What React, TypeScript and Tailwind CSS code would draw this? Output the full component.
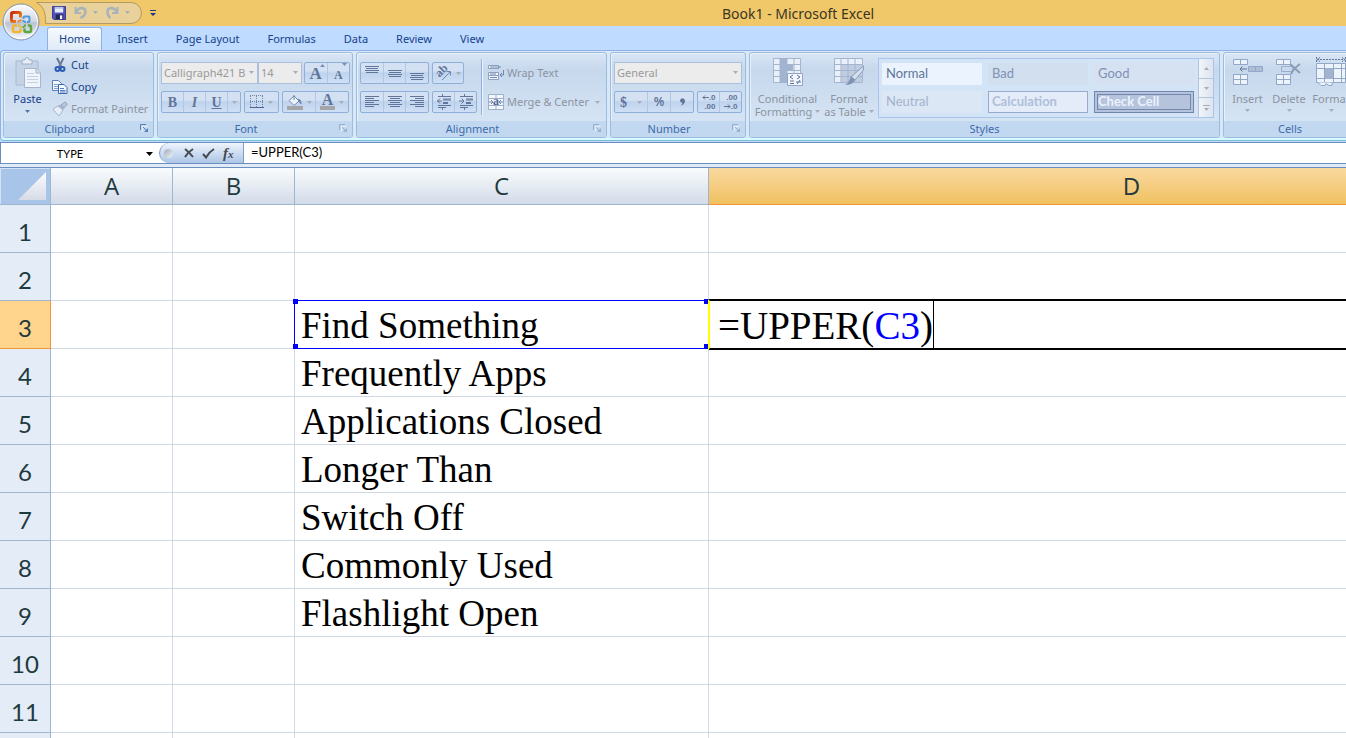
import type { ReactNode } from 'react';

const columns = ['A', 'B', 'C', 'D'];

const rows = [
  '',
  '',
  'Find Something',
  'Frequently Apps',
  'Applications Closed',
  'Longer Than',
  'Switch Off',
  'Commonly Used',
  'Flashlight Open',
  '',
  '',
];

const tabs = ['Insert', 'Page Layout', 'Formulas', 'Data', 'Review', 'View'];

const cellStyles = [
  { name: 'Normal', look: 'pl-1 bg-[#ebf3fe] text-[#5f7699]' },
  { name: 'Bad', look: 'pl-1 bg-[#d2dfee] text-[#7f92b4]' },
  { name: 'Good', look: 'pl-1 bg-[#d6e2f2] text-[#7f92b4]' },
  { name: 'Neutral', look: 'pl-1 bg-[#dbe7f5] text-[#a2b3cd]' },
  { name: 'Calculation', look: 'pl-[3px] border border-[#98abcc] bg-[#e4ecfa] font-bold text-[#afbfd8]' },
  { name: 'Check Cell', look: 'border-4 border-double border-[#7386ac] bg-[#b5c4dc] font-bold text-[#ebf2fd]' },
];

function Arrow({ color = 'text-[#a8aeb8]' }: { color?: string }) {
  return (
    <svg width="5" height="3" viewBox="0 0 5 3" className={`shrink-0 ${color}`}>
      <path d="M0 0h5L2.5 3z" fill="currentColor" />
    </svg>
  );
}

function Launcher({ active }: { active?: boolean }) {
  return (
    <button aria-label="More options" className={`absolute right-1 top-[3px] ${active ? 'text-[#5a7fae]' : 'text-[#9aafc9]'}`}>
      <svg width="9" height="9" viewBox="0 0 9 9" fill="none" stroke="currentColor">
        <path d="M.5 6V.5H6" />
        <path d="M3 3l4 4" />
        <path d="M4 8h4V4z" fill="currentColor" stroke="none" />
        <path d="M2.500 7.500v-5h5" stroke="#fff" opacity=".6" />
      </svg>
    </button>
  );
}

function Group({ title, width, children, launcher, active }: { title: string; width: string; children: ReactNode; launcher?: boolean; active?: boolean }) {
  return (
    <section className={`${width} flex h-[86px] shrink-0 flex-col overflow-hidden rounded-[3px] border border-[#9cbcdb] bg-linear-to-b from-[#d9e6f5] from-0% via-[#c7d8ed] via-20% to-[#d9e8f6] to-100% shadow-[inset_1px_1px_0_#e9f2fb]`}>
      <div className="flex h-[68px] pl-[3px] pt-[9px]">{children}</div>
      <div className={`relative h-4 bg-[#c1d8f0] text-center leading-4 text-[#3e6aaa] ${launcher ? 'pr-[18px]' : ''}`}>
        {title}
        {launcher && <Launcher active={active} />}
      </div>
    </section>
  );
}

function Strip({ children, width }: { children: ReactNode; width: string }) {
  return (
    <div className={`${width} flex h-[22px] divide-x divide-[#b0c8e6] rounded-[2px] border border-[#8fb0da] bg-linear-to-b from-[#d3e1f3] from-40% via-[#bfd3ed] via-50% to-[#cfe0f5] text-[#5f7599]`}>
      {children}
    </div>
  );
}

function Tool({ label, children }: { label: string; children: ReactNode }) {
  return (
    <button aria-label={label} className="flex flex-1 items-center justify-center gap-1">
      {children}
    </button>
  );
}

function Combo({ label, value, width }: { label: string; value: string; width: string }) {
  return (
    <div className={`${width} relative`}>
      <select aria-label={label} className="h-[22px] w-full appearance-none border border-[#abc0da] bg-[#ececec] pl-[2px] pr-3 text-[#9a9a9a]">
        <option>{value}</option>
      </select>
      <span className="pointer-events-none absolute right-1 top-[9px]">
        <Arrow />
      </span>
    </div>
  );
}

function Lines({ d }: { d: string }) {
  return (
    <svg width="14" height="16" viewBox="0 0 14 16" stroke="#5f7599" fill="none">
      <path d={d} />
    </svg>
  );
}

function BigButton({ icon, label, second, width }: { icon: ReactNode; label: string; second?: string; width: string }) {
  return (
    <button className={`${width} flex shrink-0 flex-col items-center text-[#8c93a0]`}>
      <span className="-mt-[5px] flex h-[30px] items-center">{icon}</span>
      <span className="mt-[5px] leading-[13px]">{label}</span>
      {second ? (
        <span className="flex items-center gap-[3px] leading-[13px]">
          {second}
          <Arrow />
        </span>
      ) : (
        <span className="flex h-[11px] items-center">
          <Arrow />
        </span>
      )}
    </button>
  );
}

function OfficeButton() {
  return (
    <button aria-label="Office Button" className="absolute left-[2px] top-[3px] z-10">
      <svg width="38" height="38" viewBox="0 0 38 38">
        <defs>
          <linearGradient id="orb" x1="0" y1="0" x2="0" y2="1">
            <stop offset="0" stopColor="#fdfdfe" />
            <stop offset=".48" stopColor="#d4d9e3" />
            <stop offset=".52" stopColor="#b9c2d2" />
            <stop offset="1" stopColor="#f9fcff" />
          </linearGradient>
          <linearGradient id="red" x1="0" y1="0" x2="1" y2="1">
            <stop offset="0" stopColor="#c9280b" />
            <stop offset="1" stopColor="#f59a22" />
          </linearGradient>
        </defs>
        <circle cx="19" cy="19" r="18" fill="url(#orb)" stroke="#8292ac" />
        <circle cx="19" cy="19" r="16.500" fill="none" stroke="#fff" opacity=".8" />
        <g fill="none" strokeWidth="3">
          <path d="M14 18.500h-3Q9.500 18.500 9.500 17v-6q0-1.500 1.500-1.500h6q1.500 0 1.500 1.500v3.500" stroke="url(#red)" />
          <path d="M15.500 18.500h3V16" stroke="#ee7b1c" strokeWidth="2" strokeDasharray="2 1" />
          <path d="M21.500 16v-1.500q0-1 1-1h4q1 0 1 1V18q0 1-1 1H25" stroke="#4b9bdc" strokeWidth="2" />
          <path d="M21.500 17v2H24" stroke="#4b9bdc" strokeWidth="2" strokeDasharray="2 1" />
          <path d="M15 22.500h-2.500Q11 22.500 11 24v3.500q0 1.500 1.500 1.500H17q1.500 0 1.500-1.500v-2" stroke="#f4b52e" strokeWidth="2.500" />
          <path d="M16 22.500h2.500V25" stroke="#f4b52e" strokeWidth="2" strokeDasharray="2 1" />
          <path d="M22.500 25.500v2q0 1.500 1.500 1.500h3.500q1.500 0 1.500-1.500V24q0-1.500-1.500-1.500H26" stroke="#5da53c" strokeWidth="2.500" />
          <path d="M21.500 25v-2.500H25" stroke="#5da53c" strokeWidth="2" strokeDasharray="2 1" />
        </g>
      </svg>
    </button>
  );
}

function TitleBar() {
  return (
    <header className="relative flex h-[26px] shrink-0 bg-[#f0c869]">
      <svg width="108" height="24" viewBox="0 0 108 24" className="absolute left-[36px] top-[1px]">
        <path d="M.5 1.500H95a10.500 10.500 0 0 1 0 21H9.500Q10.500 6 .5 1.500z" fill="#e8d19b" stroke="#b59a62" />
      </svg>
      <div className="relative flex h-[25px] items-center pl-[52px]">
        <button aria-label="Save">
          <svg width="14" height="14" viewBox="0 0 15 15">
            <path d="M.5.500h14v14H2l-1.500-1.500z" fill="#4f53ba" stroke="#34368c" />
            <path d="M3 1h9v6H3z" fill="#e7edf8" />
            <path d="M3 1h9v2H3z" fill="#b6c3e2" />
            <path d="M4 9h8v5H4z" fill="#24264f" />
            <path d="M8.500 10h2.500v4H8.500z" fill="#f4f6fb" />
          </svg>
        </button>
        <button aria-label="Undo" className="ml-2 flex items-center gap-[6px]">
          <svg width="13" height="13" viewBox="0 0 13 13" fill="none" stroke="#a9b2bb" strokeWidth="2">
            <path d="M1.500 1v6H7" />
            <path d="M2 6.500Q4 2 8 2q3.500.300 3.500 4Q11 10 6.500 12" strokeWidth="2.500" />
          </svg>
          <Arrow />
        </button>
        <button aria-label="Redo" className="ml-2 flex items-center gap-[6px]">
          <svg width="13" height="13" viewBox="0 0 13 13" fill="none" stroke="#a9b2bb" strokeWidth="2">
            <path d="M11.500 1v6H6" />
            <path d="M11 6.500Q9 2 5 2 1.500 2.300 1.500 6q0 3.500 3 6" strokeWidth="2.500" />
          </svg>
          <Arrow />
        </button>
        <button aria-label="Customize Quick Access Toolbar" className="ml-[20px]">
          <svg width="6" height="6" viewBox="0 0 6 6" fill="#1d3f7d">
            <path d="M0 0h6v1H0zM0 3h6L3 6z" />
          </svg>
        </button>
      </div>
      <h1 className="absolute left-[722px] top-0 text-[14px] leading-[27px] text-[#3b3523]">Book1 - Microsoft Excel</h1>
    </header>
  );
}

function ClipboardGroup() {
  return (
    <Group title="Clipboard" width="w-[151px]" launcher active>
      <button className="flex w-[41px] flex-col items-center text-[#15428b]">
        <svg width="28" height="32" viewBox="0 0 28 32" className="-mt-[5px]">
          <path d="M2 4h22v24H2z" fill="#c6d3e6" stroke="#a9bad2" />
          <path d="M8 3h3q0-2.500 2-2.500T15 3h3v4H8z" fill="#e9eef6" stroke="#9dafc8" />
          <path d="M10.500 11.500H22l4.500 4.500v14.500h-16z" fill="#f0f4fb" stroke="#a4b5cf" />
          <path d="M22 11.500V16h4.500" fill="#d5dfed" stroke="#a4b5cf" />
          <path d="M13 16.500h7M13 19.500h11M13 22.500h11M13 25.500h11" stroke="#c5d1e3" />
        </svg>
        <span className="mt-[2px] leading-[15px]">Paste</span>
        <span className="mt-1"><Arrow color="text-[#5474a8]" /></span>
      </button>
      <div className="-mt-2 ml-1 flex flex-col text-[#15428b]">
        <button className="flex h-[22px] items-center gap-[3px]">
          <svg width="16" height="16" viewBox="0 0 16 16" fill="none">
            <path d="M5 1l4.500 9M11.500 1L7 10" stroke="#6b7a94" strokeWidth="2" />
            <circle cx="5.500" cy="12" r="2" stroke="#2c5bb5" strokeWidth="2" />
            <circle cx="10.500" cy="12" r="2" stroke="#2c5bb5" strokeWidth="2" />
          </svg>
          Cut
        </button>
        <button className="flex h-[22px] items-center gap-[3px]">
          <svg width="16" height="16" viewBox="0 0 16 16">
            <path d="M.5 1.500h6l3 3v7h-9z" fill="#f4f8ff" stroke="#5c7fb9" />
            <path d="M2 5.500h4M2 7.500h4M2 9.500h4" stroke="#7fa0d2" />
            <path d="M6.500 5.500h5.500l3 3v6H6.500z" fill="#f4f8ff" stroke="#3c66ad" />
            <path d="M8 9.500h4M8 11.500h5.500M8 13h5.500" stroke="#4f7bc0" />
          </svg>
          Copy
        </button>
        <button className="flex h-[22px] items-center gap-[3px] text-[#8c93a0]">
          <svg width="16" height="16" viewBox="0 0 16 16">
            <path d="M1 8l5-3 5 4-4 6q-3-3-6-7z" fill="#e9eff8" stroke="#a5b3c9" />
            <path d="M6 4.500l2-1 4 3.500-1 2z" fill="#a8b5ca" />
            <path d="M9 4l4-3 2.500 2-3.500 4z" fill="#b9c5d8" stroke="#93a4c0" />
          </svg>
          Format Painter
        </button>
      </div>
    </Group>
  );
}

function FontGroup() {
  return (
    <Group title="Font" width="w-[196px]" launcher>
      <div className="flex flex-col gap-[7px]">
        <div className="flex">
          <Combo label="Font" value="Calligraph421 BT" width="w-[97px]" />
          <Combo label="Font size" value="14" width="w-[44px]" />
          <div className="ml-[2px]">
            <Strip width="w-[46px]">
              <Tool label="Grow font">
                <span className="relative pt-[2px] font-['Liberation_Serif',serif] text-[17px] font-bold leading-4">
                  A<span className="absolute -right-[3px] top-0 rotate-180"><Arrow color="text-[#7c8fb0]" /></span>
                </span>
              </Tool>
              <Tool label="Shrink font">
                <span className="relative pt-1 font-['Liberation_Serif',serif] text-[12px] font-bold leading-[14px]">
                  A<span className="absolute -right-1 -top-px"><Arrow color="text-[#7c8fb0]" /></span>
                </span>
              </Tool>
            </Strip>
          </div>
        </div>
        <div className="flex gap-[3px] font-['Liberation_Serif',serif]">
          <Strip width="w-[80px]">
            <Tool label="Bold"><b className="text-[14px]">B</b></Tool>
            <Tool label="Italic"><b className="text-[14px] italic">I</b></Tool>
            <Tool label="Underline"><b className="text-[14px] underline">U</b></Tool>
            <button aria-label="Underline styles" className="flex w-[12px] items-center justify-center"><Arrow /></button>
          </Strip>
          <Strip width="w-[35px]">
            <Tool label="Borders">
              <svg width="14" height="14" viewBox="0 0 14 14" stroke="#6f86ad" fill="none">
                <path d="M.5 1v11M6.500 1v11M12.500 1v11M0 .500h13M0 6.500h13" strokeDasharray="1 1" />
                <path d="M0 12.500h14" stroke="#4f6690" />
              </svg>
              <Arrow />
            </Tool>
          </Strip>
          <Strip width="w-[67px]">
            <Tool label="Fill color">
              <svg width="16" height="16" viewBox="0 0 16 16">
                <path d="M2 6.500L7 2l5 5-5 4.500z" fill="#edf3fb" stroke="#7289ae" />
                <path d="M7 6V1" stroke="#7289ae" />
                <path d="M11 4.500q4 1 3.500 6Q11.500 9 11 4.500z" fill="#6f86ad" />
                <path d="M0 12h16v4H0z" fill="#a3a5a8" />
              </svg>
              <Arrow />
            </Tool>
            <Tool label="Font color">
              <span className="border-b-4 border-[#a3a5a8] px-[2px] text-[16px] font-bold leading-3">A</span>
              <Arrow />
            </Tool>
          </Strip>
        </div>
      </div>
    </Group>
  );
}

function AlignmentGroup() {
  return (
    <Group title="Alignment" width="w-[251px]" launcher>
      <div className="flex w-[118px] flex-col gap-[7px]">
        <div className="flex gap-[3px]">
          <Strip width="w-[69px]">
            <Tool label="Top align"><Lines d="M0 1.500h14M1 3.500h12M0 5.500h14M1 7.500h12" /></Tool>
            <Tool label="Middle align"><Lines d="M0 5.500h14M1 7.500h12M0 9.500h14M1 11.500h12" /></Tool>
            <Tool label="Bottom align"><Lines d="M0 8.500h14M1 10.500h12M0 12.500h14M1 14.500h12" /></Tool>
          </Strip>
          <Strip width="w-[32px]">
            <Tool label="Orientation">
              <svg width="16" height="16" viewBox="0 0 16 16" fill="none" stroke="#6f86ad" className="overflow-visible">
                <text x="0" y="10" transform="rotate(-45 5 7)" fill="#5f7599" stroke="none" className="font-['Liberation_Serif',serif] text-[12px] font-bold">ab</text>
                <path d="M6 15l8-8M10.500 6.500H14.500v4" />
              </svg>
              <Arrow />
            </Tool>
          </Strip>
        </div>
        <div className="flex gap-[3px]">
          <Strip width="w-[69px]">
            <Tool label="Align left"><Lines d="M0 2.500h14M0 4.500h9M0 6.500h14M0 8.500h9M0 10.500h14M0 12.500h9" /></Tool>
            <Tool label="Center"><Lines d="M0 2.500h14M2 4.500h10M0 6.500h14M2 8.500h10M0 10.500h14M2 12.500h10" /></Tool>
            <Tool label="Align right"><Lines d="M0 2.500h14M5 4.500h9M0 6.500h14M5 8.500h9M0 10.500h14M5 12.500h9" /></Tool>
          </Strip>
          <Strip width="w-[45px]">
            <Tool label="Decrease indent"><Lines d="M1 2.500h13M6 5h8M6 6h8M6 8.500h5M6 9.500h5M1 11.500h13M1 13.500h8M0 7h5M3 4.500L.5 7 3 9.500M5.500 0v2M5.500 14v2" /></Tool>
            <Tool label="Increase indent"><Lines d="M1 2.500h13M7 5h7M7 6h7M7 8.500h5M7 9.500h5M1 11.500h13M1 13.500h8M0 7h5M2.500 4.500L5 7 2.500 9.500M5.500 0v2M5.500 14v2" /></Tool>
          </Strip>
        </div>
      </div>
      <div className="-mt-[3px] ml-[3px] h-[56px] border-l border-[#8fb0da] shadow-[1px_0_0_#edf4fc]" />
      <div className="ml-[6px] flex flex-col gap-[7px] text-[#8c93a0]">
        <button className="flex h-[22px] items-center gap-[3px]">
          <svg width="16" height="16" viewBox="0 0 16 16">
            <path d="M.5.500h10v3H.500zM.5 7.500h10v3H.500zM.5 10.500h10v4H.500z" fill="#f4f8fd" stroke="#8ba0c2" />
            <path d="M2 2h11M2 9h6M2 12.500h7" stroke="#6f86ad" />
            <path d="M15.500 5v5h-3M14 8l-2 2 2 2" stroke="#6f86ad" fill="none" />
          </svg>
          Wrap Text
        </button>
        <button className="flex h-[22px] items-center gap-[3px]">
          <svg width="16" height="16" viewBox="0 0 16 16">
            <path d="M.5.500h15v15H.500z" fill="#f4f8fd" stroke="#9cafcd" />
            <path d="M0 4.500h16M0 11.500h16M8 0v4M8 12v4" stroke="#9cafcd" />
            <path d="M1 8h3M12 8h3M3 6l2 2-2 2M13 6l-2 2 2 2" stroke="#6f86ad" fill="none" />
            <text x="5" y="11" fill="#4f6690" className="font-['Liberation_Serif',serif] text-[12px] font-bold">a</text>
          </svg>
          Merge &amp; Center
          <span className="ml-[3px]"><Arrow /></span>
        </button>
      </div>
    </Group>
  );
}

function NumberGroup() {
  return (
    <Group title="Number" width="w-[136px]" launcher>
      <div className="flex flex-col gap-[7px]">
        <Combo label="Number format" value="General" width="w-[128px]" />
        <div className="flex gap-[3px]">
          <Strip width="w-[80px]">
            <button aria-label="Accounting format" className="flex w-[33px] items-center justify-center gap-[10px] font-['Liberation_Serif',serif] text-[14px] font-bold">
              $<Arrow />
            </button>
            <Tool label="Percent style"><span className="text-[12px] font-semibold">%</span></Tool>
            <Tool label="Comma style">
              <svg width="5" height="8" viewBox="0 0 6 9" fill="#5f7599">
                <path d="M3 0q3 .300 3 3.500Q5.500 7.500 1 9q2-2 2-3.500Q0 5.500 0 3t3-3z" />
              </svg>
            </Tool>
          </Strip>
          <Strip width="w-[45px]">
            <Tool label="Increase decimal">
              <span className="flex flex-col items-end font-['Liberation_Sans',sans-serif] text-[8px] font-bold leading-[9px]">
                <span className="flex items-center">
                  <svg width="7" height="5" viewBox="0 0 7 5" fill="none" stroke="currentColor"><path d="M7 2.500H1M3 .500l-2 2 2 2" /></svg>
                  .0
                </span>
                <span>.00</span>
              </span>
            </Tool>
            <Tool label="Decrease decimal">
              <span className="flex flex-col items-end font-['Liberation_Sans',sans-serif] text-[8px] font-bold leading-[9px]">
                <span>.00</span>
                <span className="flex items-center">
                  <svg width="7" height="5" viewBox="0 0 7 5" fill="none" stroke="currentColor"><path d="M0 2.500h6M4 .500l2 2-2 2" /></svg>
                  .0
                </span>
              </span>
            </Tool>
          </Strip>
        </div>
      </div>
    </Group>
  );
}

function StylesGroup() {
  return (
    <Group title="Styles" width="w-[471px]">
      <BigButton
        width="w-[69px]"
        label="Conditional"
        second="Formatting"
        icon={
          <svg width="30" height="28" viewBox="0 0 30 28">
            <path d="M.5.500h27v24H.500z" fill="#eaf0f9" stroke="#a4b5cf" />
            <path d="M7 0h7v25H7zM14 6h6v6h-6z" fill="#a2b3d0" />
            <path d="M0 6.500h28M0 12.500h28M0 18.500h28M7 0v25M14 0v25M21 0v25" stroke="#a4b5cf" />
            <path d="M14.500 15.500h15v12h-15z" fill="#f3f7fd" stroke="#91a5c6" />
            <path d="M20 17l-3 2 3 2M17 23h4M17 25.500h4M24 17l3 2-3 2M23 24h5M27 22l-3 4" fill="none" stroke="#5f7599" />
          </svg>
        }
      />
      <BigButton
        width="w-[54px]"
        label="Format"
        second="as Table"
        icon={
          <svg width="30" height="28" viewBox="0 0 30 28">
            <path d="M.5.500h28v24H.500z" fill="#eaf0f9" stroke="#a4b5cf" />
            <path d="M7 6h21v18H7z" fill="#c0cde1" />
            <path d="M0 6.500h28M0 12.500h28M0 18.500h28M7 0v25M14 0v25M21 0v25" stroke="#a4b5cf" />
            <path d="M29.500 8v4L21 22l-4-3z" fill="#d5dfed" stroke="#8a9dbd" />
            <path d="M17 18l4 4q-2 5-10 5 4-2 6-9z" fill="#7f93b5" />
          </svg>
        }
      />
      <div className="-mt-1 ml-[2px] flex h-[60px] w-[336px] border border-[#a9c6ea] bg-[#d4e4f7]">
        <div className="grid flex-1 grid-cols-[repeat(3,100px)] content-start gap-[6px] pl-[3px] pt-1 font-['Lato',sans-serif] text-[13px]">
          {cellStyles.map((style) => (
            <button key={style.name} className={`flex h-[22px] items-center ${style.look}`}>
              {style.name}
            </button>
          ))}
        </div>
        <div className="flex w-[15px] flex-col divide-y divide-[#b5c4d8] border-l border-[#b5c4d8] bg-linear-to-r from-[#f1f5fa] to-[#dce4ef]">
          <button aria-label="Scroll up" className="flex flex-1 items-center justify-center">
            <span className="rotate-180"><Arrow /></span>
          </button>
          <button aria-label="Scroll down" className="flex flex-1 items-center justify-center"><Arrow /></button>
          <button aria-label="More styles" className="flex flex-1 flex-col items-center justify-center gap-[2px]">
            <span className="h-px w-[7px] bg-[#a8aeb8]" />
            <Arrow />
          </button>
        </div>
      </div>
    </Group>
  );
}

function CellsGroup() {
  return (
    <Group title="Cells" width="w-[134px]">
      <BigButton
        width="w-[41px]"
        label="Insert"
        icon={
          <svg width="32" height="28" viewBox="0 0 32 28" fill="#edf3fb" stroke="#93a7c8">
            <path d="M1.500 1.500h14v5h-14zM8.500 1.500v5M1.500 16.500h14v10h-14zM8.500 16.500v10M1.500 21.500h14" />
            <path d="M16.500 8.500h14v5h-14zM23.500 8.500v5" fill="#aebdd6" />
            <path d="M8 11h7M10.500 8.500L8 11l2.500 2.500" fill="none" stroke="#5f7599" />
          </svg>
        }
      />
      <BigButton
        width="w-[42px]"
        label="Delete"
        icon={
          <svg width="28" height="28" viewBox="0 0 28 28" fill="#edf3fb" stroke="#93a7c8">
            <path d="M1.500 1.500h14v5h-14zM8.500 1.500v5M1.500 16.500h14v10h-14zM8.500 16.500v10M1.500 21.500h14" />
            <path d="M6.500 8.500h11v5h-11z" strokeDasharray="1 1" stroke="#6f86ad" fill="none" />
            <path d="M15 6l10 9M25 6q-6 4-9 10" stroke="#8c9bb5" strokeWidth="2" fill="none" />
          </svg>
        }
      />
      <BigButton
        width="w-[42px]"
        label="Format"
        icon={
          <svg width="32" height="30" viewBox="0 0 32 30" fill="#edf3fb" stroke="#93a7c8">
            <path d="M2 2.500h28M1.500 0v5M30.500 0v5M5 .500l-3 2 3 2M27 .500l3 2-3 2" fill="none" stroke="#5f7599" strokeDasharray="2 1" />
            <path d="M1.500 6.500h29v19h-29zM9.500 6.500v19M18.500 6.500v19M26.500 6.500v19M1.500 11.500h29M1.500 21.500h29" />
            <path d="M10 11h8v11h-8z" fill="#a2b3d0" stroke="none" />
            <path d="M3 25.500l3 3h4l1-2 3 2h3v-3" />
          </svg>
        }
      />
    </Group>
  );
}

function FormulaBar() {
  return (
    <div className="flex h-[22px] shrink-0 border-y border-[#6a8fbd] bg-white font-['Lato',sans-serif] text-[13px] text-black">
      <div className="relative w-[158px] border-l border-[#6a8fbd]">
        <input aria-label="Name box" defaultValue="TYPE" className="h-5 w-[138px] text-center text-[11px] outline-none" />
        <span className="pointer-events-none absolute right-[5px] top-[9px]">
          <svg width="7" height="4" viewBox="0 0 7 4"><path d="M0 0h7L3.500 4z" /></svg>
        </span>
      </div>
      <div className="ml-px flex w-[85px] items-center gap-2 rounded-l-full border-l border-r border-[#7d9fca] bg-linear-to-b from-[#eef4fb] to-[#adc5e6] pl-1 text-[#454a52]">
        <span className="size-[9px] rounded-full bg-linear-to-br from-[#9da9bb] to-[#f4f6fa]" />
        <button aria-label="Cancel" className="ml-[3px]">
          <svg width="10" height="10" viewBox="0 0 10 10" stroke="currentColor" strokeWidth="2" fill="none">
            <path d="M1 1q4 3 8 8M9 1Q4 4 1 9" />
          </svg>
        </button>
        <button aria-label="Enter">
          <svg width="13" height="11" viewBox="0 0 13 11" stroke="currentColor" strokeWidth="2" fill="none">
            <path d="M1 6l3 3.500Q7 4 12 1" />
          </svg>
        </button>
        <button aria-label="Insert function" className="font-['Liberation_Serif',serif] text-[15px] font-bold italic leading-4">
          f<span className="text-[11px]">x</span>
        </button>
      </div>
      <input aria-label="Formula" defaultValue="=UPPER(C3)" className="min-w-0 flex-1 pl-[7px] outline-none" />
    </div>
  );
}

function Sheet() {
  return (
    <main className="min-h-0 flex-1 overflow-hidden bg-white">
      <table className="w-[1555px] table-fixed border-separate border-spacing-0">
        <colgroup>
          <col className="w-[51px]" />
          <col className="w-[122px]" />
          <col className="w-[122px]" />
          <col className="w-[414px]" />
          <col />
        </colgroup>
        <thead className="font-['Open_Sans',sans-serif] text-[24px] leading-9 text-[#1f3a3d]">
          <tr>
            <th className="h-[37px] border-b border-r border-[#9eb6ce] bg-[#a9c4e9] p-0 shadow-[inset_1px_1px_0_#d3e2f6]">
              <button aria-label="Select all" className="ml-auto mr-1 block">
                <svg width="28" height="28" viewBox="0 0 28 28">
                  <linearGradient id="corner" x1="0" y1="0" x2="0" y2="1">
                    <stop offset="0" stopColor="#fbfcfe" />
                    <stop offset="1" stopColor="#d6dbe6" />
                  </linearGradient>
                  <path d="M28 0v28H0z" fill="url(#corner)" />
                </svg>
              </button>
            </th>
            {columns.map((column) => (
              <th
                key={column}
                className={`h-[37px] border-b border-r p-0 font-normal ${
                  column === 'D' ? 'border-[#f29536] bg-linear-to-b from-[#f9d99f] to-[#f1c15f]' : 'border-[#9eb6ce] bg-linear-to-b from-[#f9fcfd] to-[#d3dbe9]'
                }`}
              >
                {column}
              </th>
            ))}
          </tr>
        </thead>
        <tbody className="text-black">
          {rows.map((text, i) => (
            <tr key={i}>
              <th
                className={`h-12 border-b border-r p-0 pt-[7px] font-['Lato',sans-serif] text-[24px] font-normal leading-9 text-[#1f3a3d] ${
                  i === 2 ? 'border-[#f29536] bg-[#ffd58d]' : 'border-[#9eb6ce] bg-[#e4ecf7]'
                }`}
              >
                {i + 1}
              </th>
              <td className="border-b border-r border-[#d0d7e5]" />
              <td className="border-b border-r border-[#d0d7e5]" />
              <td className="relative whitespace-nowrap border-b border-r border-[#d0d7e5] p-0 pl-[6px] pt-[3px] font-['Liberation_Serif',serif] text-[37px] leading-[44px]">
                {text}
                {i === 2 && (
                  <div className="pointer-events-none absolute -inset-px border border-[#0000ff]">
                    <i className="absolute -left-[2px] -top-[2px] size-[5px] bg-[#0000ff]" />
                    <i className="absolute -bottom-[1px] -left-[2px] size-[5px] bg-[#0000ff]" />
                    <i className="absolute -right-[1px] -top-[2px] size-[5px] bg-[#0000ff]" />
                    <i className="absolute -bottom-[1px] -right-[1px] size-[5px] bg-[#0000ff]" />
                  </div>
                )}
              </td>
              <td className="relative border-b border-r border-[#d0d7e5] p-0 font-['Liberation_Serif',serif] text-[39px] leading-[44px]">
                {i === 2 && (
                  <div className="absolute -bottom-[2px] -left-px -right-px -top-[2px] flex items-center border-y-2 border-l-2 border-black border-l-[#ffff00] bg-white pl-2">
                    <span className="pt-[2px]">=UPPER(<span className="text-[#0000ff]">C3</span>)</span>
                    <span className="h-full w-px bg-black" />
                  </div>
                )}
              </td>
            </tr>
          ))}
          <tr>
            <th className="h-12 border-r border-[#9eb6ce] bg-[#e4ecf7]" />
            <td className="border-r border-[#d0d7e5]" />
            <td className="border-r border-[#d0d7e5]" />
            <td className="border-r border-[#d0d7e5]" />
            <td />
          </tr>
        </tbody>
      </table>
    </main>
  );
}

export default function App() {
  return (
    <div className="relative flex h-screen flex-col overflow-hidden bg-[#bfdbff] font-['Noto_Sans',sans-serif] text-[11px]">
      <OfficeButton />
      <TitleBar />
      <nav className="flex h-6 shrink-0 items-end pl-[47px] text-[#15428b]">
        <button className="mr-px h-[23px] rounded-t-[3px] border border-b-0 border-[#8db2e3] bg-linear-to-b from-[#f6fafe] to-[#dfeaf7] px-[11px] shadow-[inset_0_1px_0_#fff]">Home</button>
        {tabs.map((tab) => (
          <button key={tab} className="h-[23px] px-[14px] pt-px">{tab}</button>
        ))}
      </nav>
      <div className="h-[91px] shrink-0 overflow-hidden rounded-l-[4px] border border-r-0 border-[#8db2e3] border-b-[#7fb9d6] bg-[#d9e8f8] shadow-[inset_0_-2px_0_#d5fbff]">
        <div className="flex gap-[3px] pl-[2px] pt-px">
          <ClipboardGroup />
          <FontGroup />
          <AlignmentGroup />
          <NumberGroup />
          <StylesGroup />
          <CellsGroup />
        </div>
      </div>
      <div className="h-px shrink-0" />
      <FormulaBar />
      <div className="h-1 shrink-0 border-b border-[#6a8fbd] bg-[#e1ebf8]" />
      <Sheet />
    </div>
  );
}
